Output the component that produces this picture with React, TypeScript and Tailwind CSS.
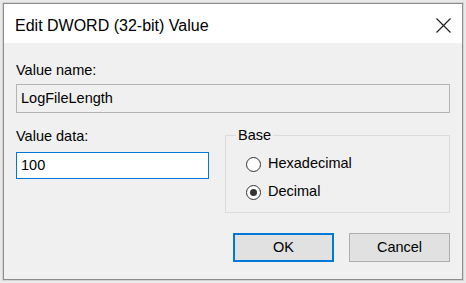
const FONT = { fontFamily: '"Liberation Sans", Arial, sans-serif' };

function Radio({ label, checked }: { label: string; checked?: boolean }) {
  return (
    <label className="flex h-[20px] items-center gap-[7px]">
      <span className="grid h-[15px] w-[15px] place-items-center rounded-full border border-[#333] bg-white">
        {checked && <span className="h-[7px] w-[7px] rounded-full bg-[#333]" />}
      </span>
      <span>{label}</span>
    </label>
  );
}

export default function App() {
  return (
    <div className="h-[283px] w-[466px] bg-[#e9e9e9] p-[3px] text-[14.5px] text-black" style={FONT}>
      <div className="flex h-full flex-col border border-[#8c8c8c] shadow-[0_0_0_1px_#d4d4d4]">
        {/* title bar */}
        <div className="flex h-[39px] items-center justify-between bg-white pl-[11px] pr-[11px] pt-[4px]">
          <span className="text-[16px]">Edit DWORD (32-bit) Value</span>
          <svg width="15" height="15" viewBox="0 0 15 15" className="-mt-[1px]">
            <path d="M0.5 0.5L14.5 14.5M14.5 0.5L0.5 14.5" stroke="#222" strokeWidth="1.2" />
          </svg>
        </div>

        <div className="flex flex-1 flex-col bg-[#f0f0f0] pl-[12px] pr-[12px] pt-[17px]">
          <div className="h-[20px] leading-[20px]">Value name:</div>
          <div className="mt-[4px] flex h-[29px] items-center border border-[#b4b4b4] bg-[#f0f0f0] px-[4px]">
            LogFileLength
          </div>

          <div className="mt-[13px] grid grid-cols-[193px_1fr] gap-[16px]">
            <div className="flex flex-col">
              <div className="h-[20px] leading-[20px]">Value data:</div>
              <div className="mt-[6px] flex h-[27px] items-center border border-[#0078d7] bg-white px-[4px]">
                100
              </div>
            </div>
            <fieldset className="-mt-px h-[88px] border border-[#dcdcdc] pl-[20px] pr-[10px]">
              <legend className="-ml-[10px] h-[20px] px-[2px] leading-[20px]">Base</legend>
              <div className="flex flex-col gap-[8px] pt-[9px]">
                <Radio label="Hexadecimal" />
                <Radio label="Decimal" checked />
              </div>
            </fieldset>
          </div>

          <div className="mt-[20px] flex justify-end gap-[15px]">
            <button className="h-[29px] w-[101px] border-2 border-[#0078d7] bg-[#e1e1e1]">OK</button>
            <button className="h-[29px] w-[101px] border border-[#adadad] bg-[#e1e1e1]">Cancel</button>
          </div>
        </div>
      </div>
    </div>
  );
}
